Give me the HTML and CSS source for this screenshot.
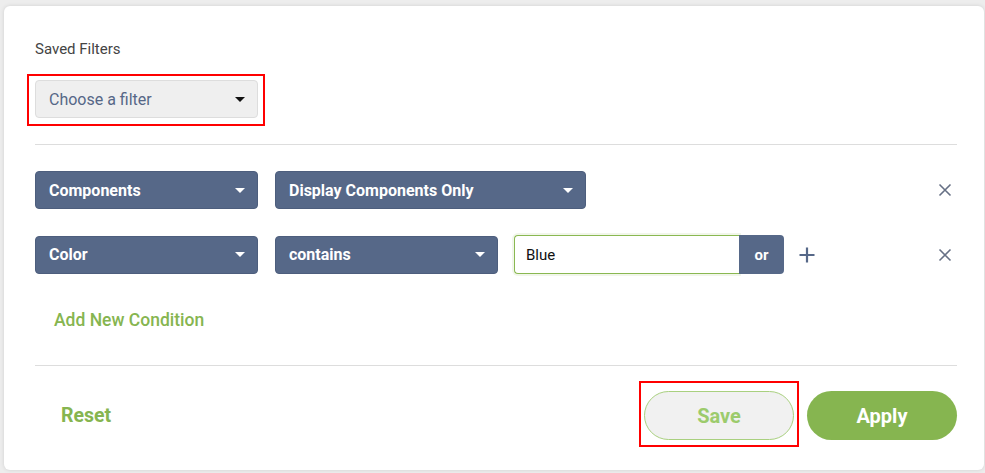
FILE: index.html
```html
<!DOCTYPE html>
<html lang="en">
<head>
    <meta charset="UTF-8">
    <meta name="viewport" content="width=device-width, initial-scale=1.0">
    <title>Filters</title>
    <link rel="stylesheet" href="styles.css">
</head>
<body>
    <div class="panel">
        <div class="saved-label">Saved Filters</div>
        <div class="marked marked-select">
            <div class="select select-light">
                <span>Choose a filter</span>
                <span class="caret caret-dark"></span>
            </div>
        </div>

        <hr class="divider divider-top">

        <div class="condition">
            <div class="select select-dark w-223"><span>Components</span><span class="caret"></span></div>
            <div class="select select-dark w-311"><span>Display Components Only</span><span class="caret"></span></div>
            <button class="remove-btn" title="Remove">
                <svg width="14" height="14" viewBox="0 0 14 14"><path d="M1.5 1.5 L12.5 12.5 M12.5 1.5 L1.5 12.5" stroke="#667085" stroke-width="1.6" fill="none"/></svg>
            </button>
        </div>

        <div class="condition">
            <div class="select select-dark w-223"><span>Color</span><span class="caret"></span></div>
            <div class="select select-dark w-223"><span>contains</span><span class="caret"></span></div>
            <div class="value-group">
                <input type="text" class="value-input" value="Blue">
                <button class="or-btn">or</button>
            </div>
            <button class="add-btn" title="Add">
                <svg width="16" height="16" viewBox="0 0 16 16"><path d="M8 0.5 V15.5 M0.5 8 H15.5" stroke="#566888" stroke-width="2.2" fill="none"/></svg>
            </button>
            <button class="remove-btn" title="Remove">
                <svg width="14" height="14" viewBox="0 0 14 14"><path d="M1.5 1.5 L12.5 12.5 M12.5 1.5 L1.5 12.5" stroke="#667085" stroke-width="1.6" fill="none"/></svg>
            </button>
        </div>

        <div class="add-condition">Add New Condition</div>

        <hr class="divider divider-bottom">

        <div class="footer">
            <a class="reset-link">Reset</a>
            <div class="footer-actions">
                <div class="marked marked-save">
                    <button class="pill-btn save-btn">Save</button>
                </div>
                <button class="pill-btn apply-btn">Apply</button>
            </div>
        </div>
    </div>
</body>
</html>
```

FILE: styles.css
```css
body {
    margin: 0;
    font-family: Roboto, "Liberation Sans", Arial, sans-serif;
    background-color: #ededed;
    height: 473px;
    overflow: hidden;
}
.panel {
    margin: 6px 1px 0 4px;
    height: 464px;
    box-sizing: border-box;
    padding: 34px 27px 0 31px;
    background: #fff;
    border-radius: 6px;
    box-shadow: 0 0 4px rgba(0, 0, 0, 0.12);
}
.saved-label {
    font-size: 15px;
    line-height: 18px;
    color: #444;
    margin-bottom: 22px;
}
.marked {
    position: relative;
    display: flex;
    width: max-content;
}
.marked::after {
    content: "";
    position: absolute;
    border: 2px solid #f00;
    pointer-events: none;
}
.marked-select::after {
    inset: -6px -7px -8px -8px;
}
.marked-save::after {
    inset: -10px -5px -7px -5px;
}
.select {
    box-sizing: border-box;
    height: 38px;
    padding: 0 12px 0 13px;
    border-radius: 4px;
    display: flex;
    align-items: center;
    justify-content: space-between;
}
.select-light {
    width: 223px;
    background: #efefef;
    border: 1px solid #ddd;
    color: #566787;
    font-size: 16px;
}
.select-dark {
    background: #566888;
    border: 1px solid #4d5e7d;
    color: #fff;
    font-size: 16px;
    font-weight: bold;
}
.w-223 { width: 223px; }
.w-311 { width: 311px; }
.caret {
    width: 0;
    height: 0;
    border-left: 5px solid transparent;
    border-right: 5px solid transparent;
    border-top: 5px solid #fff;
}
.caret-dark {
    border-top-color: #111;
}
.divider {
    border: none;
    border-top: 1px solid #ddd;
    margin: 0;
}
.divider-top {
    margin-top: 26px;
    margin-bottom: 26px;
}
.condition {
    display: flex;
    align-items: center;
    gap: 17px;
    margin-bottom: 26px;
}
.condition + .condition {
    margin-bottom: 36px;
}
.value-group {
    display: flex;
    margin-left: -1px;
}
.value-input {
    box-sizing: border-box;
    width: 225px;
    height: 39px;
    border: 1px solid #8ab851;
    border-right: none;
    border-radius: 4px 0 0 4px;
    padding: 0 11px;
    font-family: inherit;
    font-size: 15px;
    color: #111;
    box-shadow: 0 0 0 2px rgba(138, 184, 81, 0.12);
    outline: none;
}
.or-btn {
    width: 45px;
    height: 39px;
    border: none;
    border-radius: 0 4px 4px 0;
    background: #566888;
    color: #fff;
    font-family: inherit;
    font-size: 15px;
    font-weight: bold;
    padding: 0;
}
.add-btn, .remove-btn {
    background: none;
    border: none;
    padding: 0;
    display: flex;
    cursor: pointer;
}
.add-btn {
    margin-left: -2px;
}
.remove-btn {
    margin-left: auto;
    margin-right: 5px;
}
.add-condition {
    font-size: 17.5px;
    line-height: 20px;
    font-weight: 500;
    color: #86b550;
    padding-left: 19px;
    margin-bottom: 35px;
}
.divider-bottom {
    margin-bottom: 25px;
}
.footer {
    display: flex;
    justify-content: space-between;
    align-items: center;
}
.reset-link {
    font-size: 19.5px;
    font-weight: bold;
    color: #86b550;
    padding-left: 26px;
    cursor: pointer;
}
.footer-actions {
    display: flex;
    gap: 13px;
}
.pill-btn {
    width: 150px;
    height: 49px;
    border-radius: 25px;
    font-family: inherit;
    font-size: 20px;
    font-weight: bold;
    cursor: pointer;
    display: block;
}
.save-btn {
    background: #f1f1f1;
    border: 1px solid #a9d07f;
    color: #9ccb6c;
}
.apply-btn {
    background: #86b550;
    border: none;
    color: #fff;
}
```
